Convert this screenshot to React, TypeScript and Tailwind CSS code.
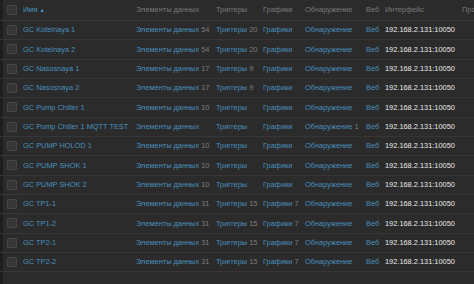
import React from "react";

type Row = {
  name: string;
  items?: string;
  triggers?: string;
  graphs?: string;
  disc?: string;
};

const rows: Row[] = [
  { name: "GC Kotelnaya 1", items: "54", triggers: "20" },
  { name: "GC Kotelnaya 2", items: "54", triggers: "20" },
  { name: "GC Nasosnaya 1", items: "17", triggers: "9" },
  { name: "GC Nasosnaya 2", items: "17", triggers: "9" },
  { name: "GC Pump Chiller 1", items: "10" },
  { name: "GC Pump Chiller 1 MQTT TEST", disc: "1" },
  { name: "GC PUMP HOLOD 1", items: "10" },
  { name: "GC PUMP SHOK 1", items: "10" },
  { name: "GC PUMP SHOK 2", items: "10" },
  { name: "GC TP1-1", items: "31", triggers: "15", graphs: "7" },
  { name: "GC TP1-2", items: "31", triggers: "15", graphs: "7" },
  { name: "GC TP2-1", items: "31", triggers: "15", graphs: "7" },
  { name: "GC TP2-2", items: "31", triggers: "15", graphs: "7" },
];

const grid =
  "grid grid-cols-[23px_113px_80px_47px_42px_61px_19px_77px_1fr] items-center";

function Box() {
  return (
    <div className="ml-[7px] h-[10px] w-[10px] rounded-[1px] border border-[#454545] bg-[#363636]" />
  );
}

function Link({ t, n }: { t: string; n?: string }) {
  return (
    <div className="whitespace-nowrap">
      <span className="text-[#4a8fbd]">{t}</span>
      {n ? <span className="text-[#7c7c7c]"> {n}</span> : null}
    </div>
  );
}

export default function App() {
  return (
    <div
      className="flex h-[284px] w-[474px] overflow-hidden bg-[#2b2b2b] text-[7.4px] leading-none"
      style={{ fontFamily: '"Liberation Sans", Arial, sans-serif' }}
    >
      <div className="w-[3px] shrink-0 bg-[#1e1e1e]" />
      <div className="flex-1 min-w-0">
        <div className={`${grid} h-[21px] border-b border-[#383838] -ml-[3px] text-[#7a7a7a]`}>
          <Box />
          <div className="text-[#4a8fbd]">
            Имя <span className="text-[5.5px]">▲</span>
          </div>
          <div>Элементы данных</div>
          <div>Триггеры</div>
          <div>Графики</div>
          <div>Обнаружение</div>
          <div>Веб</div>
          <div>Интерфейс</div>
          <div className="whitespace-nowrap">Прокси</div>
        </div>
        {rows.map((r) => (
          <div
            key={r.name}
            className={`${grid} h-[19.33px] border-b border-[#363636] -ml-[3px]`}
          >
            <Box />
            <div className="whitespace-nowrap text-[#4a8fbd]">{r.name}</div>
            <Link t="Элементы данных" n={r.items} />
            <Link t="Триггеры" n={r.triggers} />
            <Link t="Графики" n={r.graphs} />
            <Link t="Обнаружение" n={r.disc} />
            <Link t="Веб" />
            <div className="whitespace-nowrap text-[#e8e8e8]">192.168.2.131:10050</div>
            <div />
          </div>
        ))}
      </div>
    </div>
  );
}
